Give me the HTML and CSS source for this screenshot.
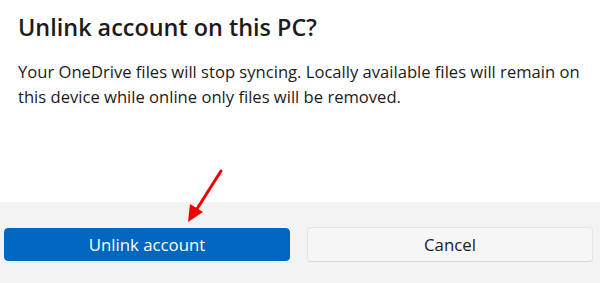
FILE: index.html
```html
<!DOCTYPE html>
<html>
<head>
    <title>Unlink account</title>
    <link rel="stylesheet" href="styles.css">
</head>
<body>
    <div class="dialog">
        <div class="content">
            <h1 class="title">Unlink account on this PC?</h1>
            <p class="message">Your OneDrive files will stop syncing. Locally available files will remain on this device while online only files will be removed.</p>
        </div>
        <div class="footer">
            <button class="btn btn-primary">Unlink account</button>
            <button class="btn btn-secondary">Cancel</button>
        </div>
        <svg class="arrow" width="60" height="70" viewBox="0 0 60 70">
            <line x1="53" y1="11" x2="27" y2="52" stroke="#f00000" stroke-width="3" stroke-linecap="round"/>
            <polygon points="20,62 22,44 35,52" fill="#f00000"/>
        </svg>
    </div>
</body>
</html>
```

FILE: styles.css
```css
body {
    margin: 0;
    font-family: "Open Sans", "Noto Sans", sans-serif;
    background: white;
}
.dialog {
    position: relative;
    width: 600px;
    height: 283px;
    display: flex;
    flex-direction: column;
}
.content {
    flex: 1;
    padding: 10px 18px 0;
}
.title {
    margin: 0;
    font-size: 23.4px;
    font-weight: 600;
    color: #1b1b1b;
    line-height: 34px;
}
.message {
    margin: 15px 0 0;
    font-size: 16.6px;
    line-height: 25px;
    color: #1b1b1b;
}
.footer {
    height: 81px;
    box-sizing: border-box;
    background: #f3f3f3;
    display: flex;
    gap: 17px;
    padding: 26px 7px 0 4px;
}
.btn {
    flex: 1;
    height: 33px;
    border-radius: 4px;
    font-family: inherit;
    font-size: 16.8px;
    cursor: pointer;
}
.btn-primary {
    background: #0067c0;
    color: white;
    border: 1px solid #0067c0;
}
.btn-secondary {
    background: #f6f6f6;
    color: #1b1b1b;
    border: 1px solid #e5e5e5;
    border-bottom-color: #d6d6d6;
    height: 35px;
    margin-top: -1px;
}
.arrow {
    position: absolute;
    left: 168px;
    top: 160px;
}
```
